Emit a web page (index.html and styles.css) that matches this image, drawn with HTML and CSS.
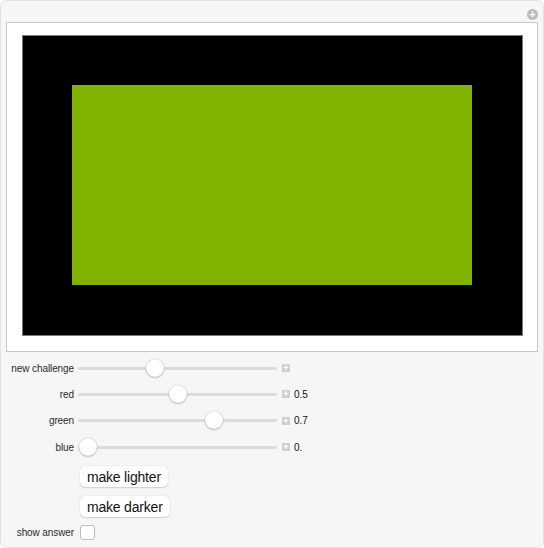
FILE: index.html
```html
<!DOCTYPE html>
<html lang="en">
<head>
  <meta charset="UTF-8">
  <meta name="viewport" content="width=device-width, initial-scale=1.0">
  <title>Color Challenge</title>
  <link rel="stylesheet" href="styles.css">
</head>
<body>
  <div class="panel">
    <span class="corner-btn">+</span>

    <div class="view">
      <div class="frame">
        <div class="swatch"></div>
      </div>
    </div>

    <div class="controls">
      <div class="row">
        <span class="label">new challenge</span>
        <div class="track"><span class="thumb" style="left: 68px"></span></div>
        <span class="plus">+</span>
        <span class="value"></span>
      </div>
      <div class="row">
        <span class="label">red</span>
        <div class="track"><span class="thumb" style="left: 91px"></span></div>
        <span class="plus">+</span>
        <span class="value">0.5</span>
      </div>
      <div class="row">
        <span class="label">green</span>
        <div class="track"><span class="thumb" style="left: 127px"></span></div>
        <span class="plus">+</span>
        <span class="value">0.7</span>
      </div>
      <div class="row">
        <span class="label">blue</span>
        <div class="track"><span class="thumb" style="left: 1px"></span></div>
        <span class="plus">+</span>
        <span class="value">0.</span>
      </div>

      <div class="buttons">
        <button class="btn">make lighter</button>
        <button class="btn">make darker</button>
      </div>

      <div class="answer">
        <span class="label">show answer</span>
        <span class="checkbox"></span>
      </div>
    </div>
  </div>
</body>
</html>
```

FILE: styles.css
```css
body {
  margin: 0;
  font-family: "Liberation Sans", Arial, sans-serif;
  background: #ffffff;
}

.panel {
  position: relative;
  box-sizing: border-box;
  width: 544px;
  height: 548px;
  padding: 21px 5px 0 5px;
  background: #f6f6f6;
  border: 1px solid #e2e2e2;
  border-radius: 6px;
}

.corner-btn {
  position: absolute;
  top: 8px;
  right: 5px;
  width: 11px;
  height: 11px;
  border-radius: 50%;
  background: #bdbdbd;
  color: #ffffff;
  font-size: 11px;
  font-weight: bold;
  line-height: 11px;
  text-align: center;
}

.view {
  box-sizing: border-box;
  width: 532px;
  height: 330px;
  padding: 12px 0 0 15px;
  background: #ffffff;
  border: 1px solid #c6c6c6;
}

.frame {
  box-sizing: border-box;
  width: 501px;
  height: 301px;
  padding: 49px;
  background: #000000;
  border: 1px solid #7a7a7a;
}

.swatch {
  width: 400px;
  height: 200px;
  background: #80b300;
}

.controls {
  padding-top: 3px;
}

.row {
  display: flex;
  align-items: center;
  height: 26.3px;
}

.label {
  width: 68px;
  text-align: right;
  font-size: 10px;
  letter-spacing: -0.1px;
  color: #2a2a2a;
}

.track {
  position: relative;
  width: 199px;
  height: 3px;
  margin-left: 4px;
  border-radius: 2px;
  background: #dcdcdc;
}

.thumb {
  position: absolute;
  top: -8px;
  width: 18px;
  height: 18px;
  border-radius: 50%;
  background: #ffffff;
  box-shadow: 0 0 1px rgba(0, 0, 0, 0.35), 0 1px 2px rgba(0, 0, 0, 0.2);
}

.plus {
  width: 8px;
  height: 8px;
  margin-left: 5px;
  background: #cfcfcf;
  color: #ffffff;
  font-size: 9px;
  font-weight: bold;
  line-height: 8px;
  text-align: center;
}

.value {
  margin-left: 4px;
  font-size: 10px;
  color: #111111;
}

.buttons {
  display: flex;
  flex-direction: column;
  align-items: flex-start;
  gap: 9px;
  padding: 6px 0 0 74px;
}

.btn {
  height: 21px;
  padding: 0 7px;
  font-family: "Liberation Sans", Arial, sans-serif;
  font-size: 14px;
  letter-spacing: -0.2px;
  color: #111111;
  background: #ffffff;
  border: none;
  border-radius: 5px;
  box-shadow: 0 0 1px rgba(0, 0, 0, 0.3), 0 1px 1px rgba(0, 0, 0, 0.12);
}

.answer {
  display: flex;
  align-items: center;
  margin-top: 8px;
}

.checkbox {
  width: 13px;
  height: 13px;
  margin-left: 6px;
  background: #ffffff;
  border: 1px solid #bdbdbd;
  border-radius: 3px;
}
```
